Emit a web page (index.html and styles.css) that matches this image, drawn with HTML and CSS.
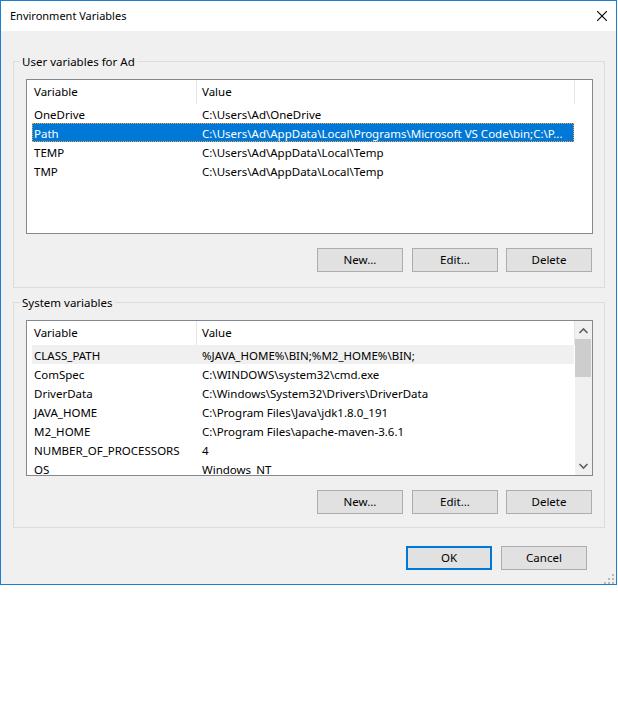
FILE: index.html
```html
<!DOCTYPE html>
<html>
<head>
<meta charset="utf-8">
<title>Environment Variables</title>
<link rel="stylesheet" href="styles.css">
</head>
<body>
<div class="window">
  <div class="titlebar">
    <span class="title">Environment Variables</span>
    <svg class="close" width="10" height="10" viewBox="0 0 10 10"><path d="M0 0 L10 10 M10 0 L0 10" stroke="#000" stroke-width="1.1" fill="none"/></svg>
  </div>
  <div class="content">
    <fieldset class="group">
      <legend>User variables for Ad</legend>
      <div class="group-body">
        <div class="listbox lb-user">
          <div class="list-main">
            <div class="lv-header"><div class="hcell c1">Variable</div><div class="hcell c2">Value</div></div>
            <div class="row"><span class="col1">OneDrive</span><span class="col2">C:\Users\Ad\OneDrive</span></div>
            <div class="row selected"><span class="col1">Path</span><span class="col2">C:\Users\Ad\AppData\Local\Programs\Microsoft VS Code\bin;C:\P...</span></div>
            <div class="row"><span class="col1">TEMP</span><span class="col2">C:\Users\Ad\AppData\Local\Temp</span></div>
            <div class="row"><span class="col1">TMP</span><span class="col2">C:\Users\Ad\AppData\Local\Temp</span></div>
          </div>
        </div>
        <div class="btn-row">
          <div class="btn">New...</div>
          <div class="btn">Edit...</div>
          <div class="btn">Delete</div>
        </div>
      </div>
    </fieldset>
    <fieldset class="group group-sys">
      <legend>System variables</legend>
      <div class="group-body">
        <div class="listbox lb-sys">
          <div class="list-main">
            <div class="lv-header"><div class="hcell c1">Variable</div><div class="hcell c2">Value</div></div>
            <div class="row hot"><span class="col1">CLASS_PATH</span><span class="col2">%JAVA_HOME%\BIN;%M2_HOME%\BIN;</span></div>
            <div class="row"><span class="col1">ComSpec</span><span class="col2">C:\WINDOWS\system32\cmd.exe</span></div>
            <div class="row"><span class="col1">DriverData</span><span class="col2">C:\Windows\System32\Drivers\DriverData</span></div>
            <div class="row"><span class="col1">JAVA_HOME</span><span class="col2">C:\Program Files\Java\jdk1.8.0_191</span></div>
            <div class="row"><span class="col1">M2_HOME</span><span class="col2">C:\Program Files\apache-maven-3.6.1</span></div>
            <div class="row"><span class="col1">NUMBER_OF_PROCESSORS</span><span class="col2">4</span></div>
            <div class="row"><span class="col1">OS</span><span class="col2">Windows_NT</span></div>
          </div>
          <div class="scrollbar">
            <div class="sb-btn"><svg width="17" height="17" viewBox="0 0 17 17"><polyline points="4.5,12 8.5,8 12.5,12" fill="none" stroke="#606060" stroke-width="1.6"/></svg></div>
            <div class="sb-thumb"></div>
            <div class="sb-track"></div>
            <div class="sb-btn"><svg width="17" height="17" viewBox="0 0 17 17"><polyline points="4.5,6 8.5,10 12.5,6" fill="none" stroke="#606060" stroke-width="1.6"/></svg></div>
          </div>
        </div>
        <div class="btn-row">
          <div class="btn">New...</div>
          <div class="btn">Edit...</div>
          <div class="btn">Delete</div>
        </div>
      </div>
    </fieldset>
    <div class="footer">
      <div class="btn btn-default">OK</div>
      <div class="btn">Cancel</div>
    </div>
  </div>
  <svg class="grip" width="10" height="10" viewBox="0 0 10 10">
    <rect x="8" y="0" width="2" height="2"/>
    <rect x="4" y="4" width="2" height="2"/>
    <rect x="8" y="4" width="2" height="2"/>
    <rect x="0" y="8" width="2" height="2"/>
    <rect x="4" y="8" width="2" height="2"/>
    <rect x="8" y="8" width="2" height="2"/>
  </svg>
</div>
</body>
</html>
```
FILE: styles.css
```css
html, body {
  margin: 0;
  padding: 0;
  background: #ffffff;
}

.window {
  position: relative;
  box-sizing: border-box;
  width: 617px;
  height: 585px;
  border: 1px solid #1a7fd4;
  background: #f0f0f0;
  display: flex;
  flex-direction: column;
  font-family: "Noto Sans", "Liberation Sans", sans-serif;
  font-size: 11.5px;
  color: #000;
}

.titlebar {
  height: 30px;
  background: #ffffff;
  display: flex;
  align-items: center;
  padding-left: 9px;
  flex: none;
}

.title {
  line-height: 16px;
  font-size: 11px;
}

.close {
  margin-left: auto;
  margin-right: 9px;
  margin-top: -1px;
}

.content {
  flex: 1;
  padding: 22px 11px 0 12px;
}

.group {
  margin: 0;
  padding: 0;
  border: 1px solid #dcdcdc;
  min-inline-size: 0;
}

.group legend {
  padding: 0 2px;
  margin-left: 6px;
  line-height: 16px;
  position: relative;
  top: 1px;
}

.group-sys {
  margin-top: 6px;
}

.group-body {
  padding: 10px 11px 15px 12px;
}

.group-sys .group-body {
  padding-bottom: 13px;
}

.listbox {
  box-sizing: border-box;
  height: 155px;
  border: 1px solid #828790;
  background: #ffffff;
  display: flex;
  overflow: hidden;
}

.lb-sys {
  height: 156px;
}

.list-main {
  flex: 1;
  min-width: 0;
  overflow: hidden;
}

.lv-header {
  display: flex;
  width: 548px;
  height: 24px;
}

.hcell {
  box-sizing: border-box;
  border-right: 1px solid #e5e5e5;
  line-height: 24px;
  white-space: nowrap;
}

.hcell.c1 {
  width: 170px;
  padding-left: 7px;
}

.hcell.c2 {
  width: 378px;
  padding-left: 5px;
}

.row {
  display: flex;
  box-sizing: border-box;
  width: 542px;
  height: 19px;
  margin-left: 5px;
  line-height: 21px;
  white-space: nowrap;
}

.col1 {
  box-sizing: border-box;
  width: 170px;
  padding-left: 2px;
  flex: none;
  overflow: hidden;
}

.col2 {
  flex: 1;
  min-width: 0;
  overflow: hidden;
}

.row.selected {
  background: #0078d7;
  color: #ffffff;
  outline: 1px dotted #f7a13b;
  outline-offset: -1px;
}

.row.hot {
  background: #f0f0f0;
}

.scrollbar {
  width: 17px;
  flex: none;
  background: #f0f0f0;
  display: flex;
  flex-direction: column;
}

.sb-btn {
  height: 17px;
  flex: none;
}

.sb-btn svg {
  display: block;
}

.sb-thumb {
  height: 38px;
  margin-top: 1px;
  margin-right: 1px;
  background: #cdcdcd;
  flex: none;
}

.sb-track {
  flex: 1;
}

.btn-row {
  display: flex;
  justify-content: flex-end;
  gap: 8px;
  margin-top: 14px;
  margin-right: 1px;
}

.btn-row .btn:first-child {
  margin-right: 1px;
}

.btn {
  box-sizing: border-box;
  width: 86px;
  height: 24px;
  border: 1px solid #adadad;
  background: #e1e1e1;
  text-align: center;
  line-height: 22px;
  font-size: 11.5px;
}

.btn-default {
  border: 2px solid #0078d7;
  line-height: 20px;
}

.footer {
  display: flex;
  justify-content: flex-end;
  gap: 9px;
  margin-top: 18px;
  margin-right: 18px;
}

.grip {
  position: absolute;
  right: 2px;
  bottom: 0;
  fill: #b9b9b9;
}
```
